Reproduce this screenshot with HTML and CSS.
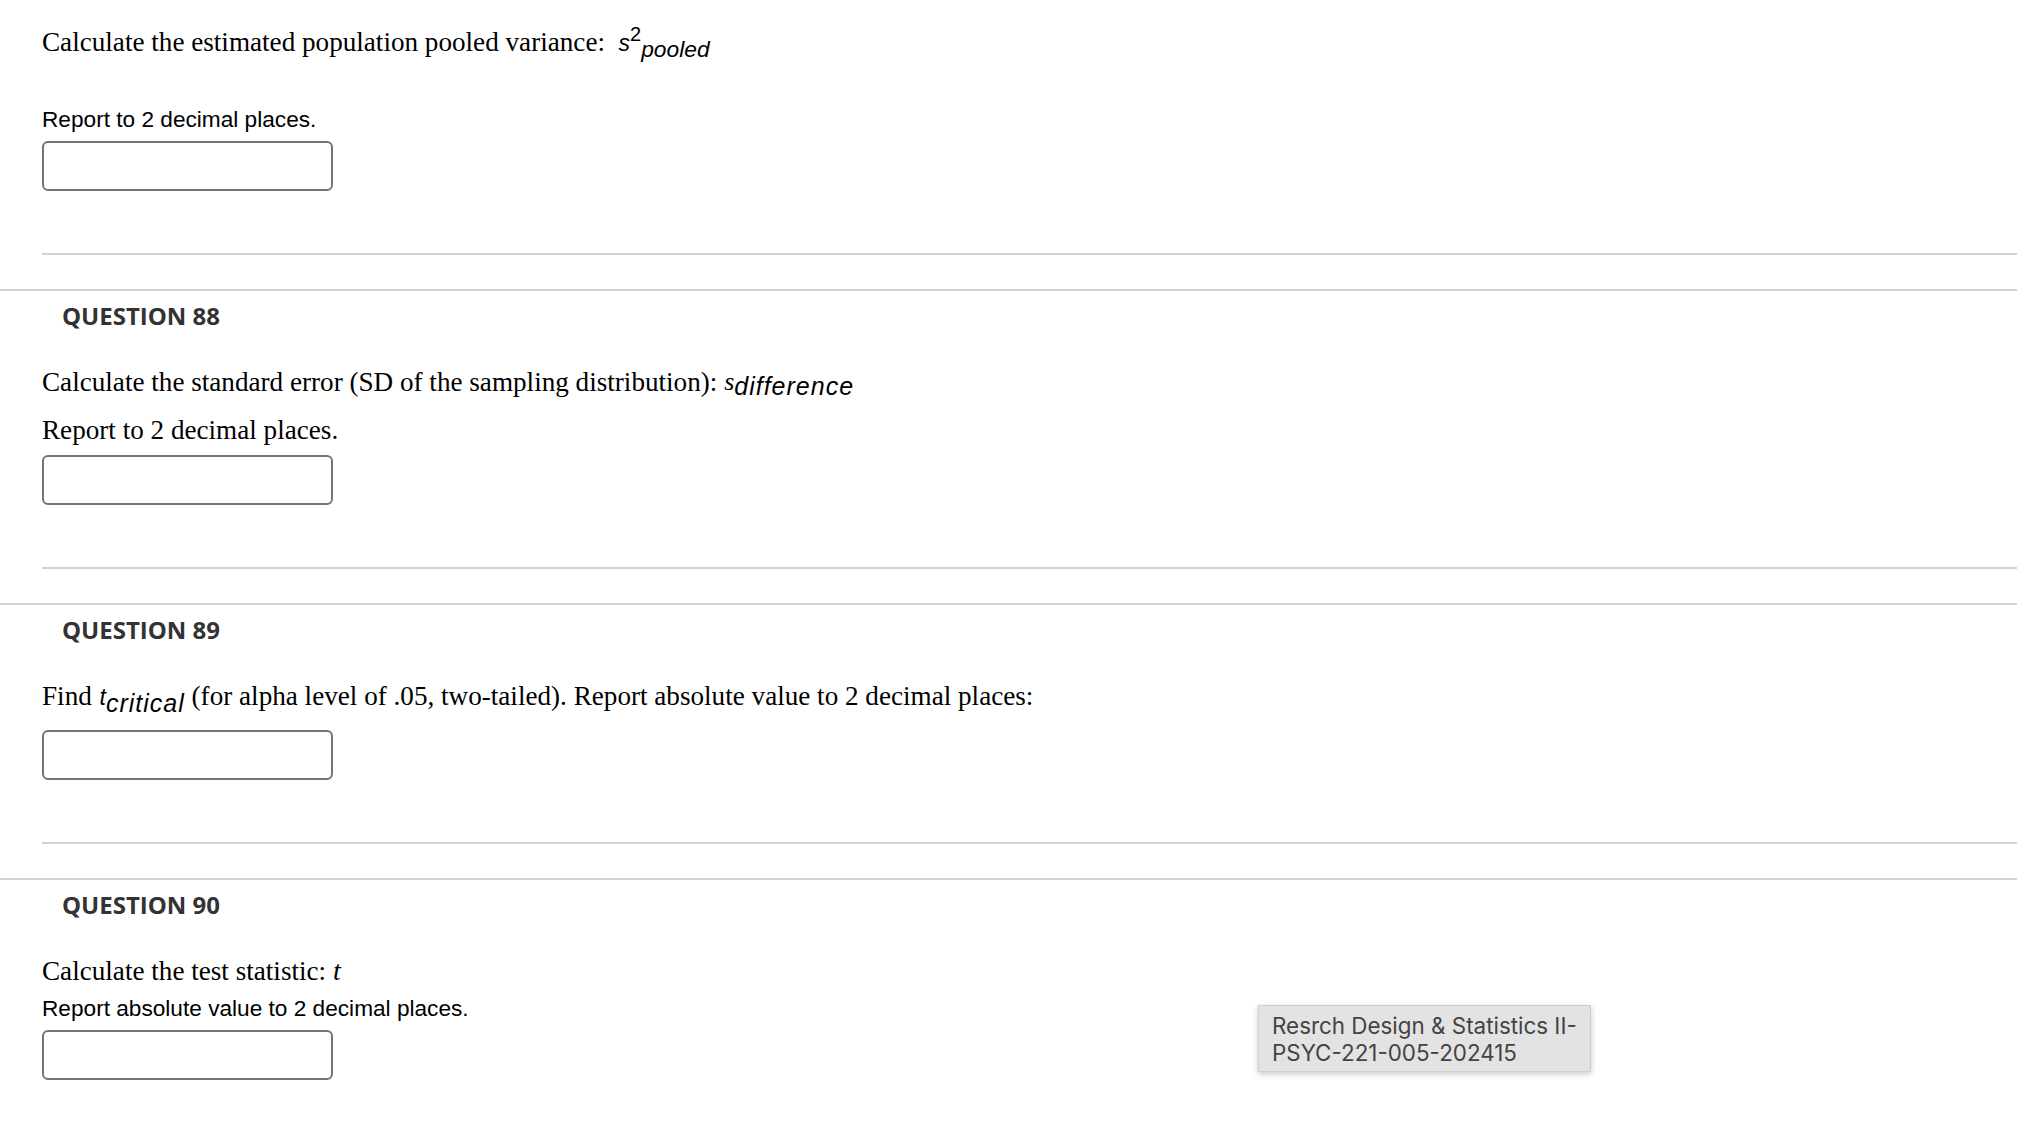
FILE: index.html
```html
<!DOCTYPE html>
<html lang="en">
<head>
<meta charset="utf-8">
<title>Questions</title>
<link rel="stylesheet" href="styles.css">
</head>
<body>
<div class="page">
  <section class="q q-first">
    <div class="q-body">
      <p class="serif">Calculate the estimated population pooled variance:&nbsp;&nbsp;<i class="m-s">s</i><span class="m-sup">2</span><i class="m-sub">pooled</i></p>
      <p class="sans sans-gap-lg">Report to 2 decimal places.</p>
      <div class="answer answer-after-sans"></div>
    </div>
    <hr class="divider">
  </section>

  <section class="q">
    <h3 class="q-title">QUESTION 88</h3>
    <div class="q-body">
      <p class="serif first-line">Calculate the standard error (SD of the sampling distribution): <i class="m-s-serif">s</i><i class="m-sub-wide m-sub-diff">difference</i></p>
      <p class="serif serif-gap">Report to 2 decimal places.</p>
      <div class="answer answer-after-serif"></div>
    </div>
    <hr class="divider">
  </section>

  <section class="q">
    <h3 class="q-title">QUESTION 89</h3>
    <div class="q-body">
      <p class="serif first-line">Find <i class="m-t">t</i><i class="m-sub-wide m-sub-crit">critical</i> (for alpha level of .05, two-tailed). Report absolute value to 2 decimal places:</p>
      <div class="answer answer-after-sub"></div>
    </div>
    <hr class="divider">
  </section>

  <section class="q">
    <h3 class="q-title">QUESTION 90</h3>
    <div class="q-body">
      <p class="serif first-line">Calculate the test statistic: <i class="m-t-serif">t</i></p>
      <p class="sans sans-gap-sm">Report absolute value to 2 decimal places.</p>
      <div class="answer answer-after-sans"></div>
    </div>
  </section>
</div>

<div class="tooltip">Resrch Design &amp; Statistics II-<br>PSYC-221-005-202415</div>
</body>
</html>
```

FILE: styles.css
```css
* {
  box-sizing: border-box;
}

html, body {
  margin: 0;
  padding: 0;
  background: #ffffff;
}

.page {
  padding-top: 26px;
}

.q {
  border-top: 2px solid #d2d2d2;
  padding-top: 9px;
}

.q-first {
  border-top: none;
  padding-top: 0;
}

.q-title {
  margin: 0 0 0 62px;
  font-family: "Open Sans", sans-serif;
  font-weight: 700;
  font-size: 24px;
  line-height: 32px;
  color: #333333;
}

.q-body {
  padding-left: 42px;
}

.serif {
  margin: 0;
  font-family: "Liberation Serif", "Times New Roman", serif;
  font-size: 27.15px;
  line-height: 32px;
  color: #000000;
}

.sans {
  margin: 0;
  font-family: "Liberation Sans", Arial, sans-serif;
  font-size: 22.65px;
  line-height: 28px;
  color: #000000;
}

.first-line {
  margin-top: 34px;
}

.serif-gap {
  margin-top: 16px;
}

.sans-gap-lg {
  margin-top: 47px;
}

.sans-gap-sm {
  margin-top: 7px;
}

.answer {
  width: 291px;
  height: 50px;
  border: 2px solid #747474;
  border-radius: 6px;
  background: #ffffff;
}

.answer-after-sans {
  margin-top: 8px;
}

.answer-after-serif {
  margin-top: 9px;
}

.answer-after-sub {
  margin-top: 18px;
}

.divider {
  display: block;
  height: 0;
  margin: 62px 0 34px 42px;
  border: 0;
  border-top: 2px solid #d2d2d2;
}

/* inline math */
.m-s {
  font-family: "Liberation Sans", Arial, sans-serif;
  font-style: italic;
  font-size: 23px;
  line-height: 0;
}

.m-sup {
  font-family: "Liberation Sans", Arial, sans-serif;
  font-size: 20px;
  line-height: 0;
  vertical-align: 10px;
}

.m-sub {
  font-family: "Liberation Sans", Arial, sans-serif;
  font-style: italic;
  font-size: 22.8px;
  line-height: 0;
  vertical-align: -6px;
}

.m-s-serif {
  font-family: "Liberation Serif", "Times New Roman", serif;
  font-style: italic;
  font-size: 26px;
  line-height: 0;
  vertical-align: 1px;
}

.m-sub-wide {
  font-family: "Liberation Sans", Arial, sans-serif;
  font-style: italic;
  font-size: 25px;
  letter-spacing: 1px;
  line-height: 0;
}

.m-sub-diff {
  vertical-align: -3.5px;
}

.m-sub-crit {
  vertical-align: -6.5px;
}

.m-t {
  font-family: "Liberation Sans", Arial, sans-serif;
  font-style: italic;
  font-size: 23px;
  line-height: 0;
  padding-left: 1px;
}

.m-t-serif {
  font-family: "Liberation Serif", "Times New Roman", serif;
  font-style: italic;
  font-size: 28px;
}

.tooltip {
  position: absolute;
  left: 1258px;
  top: 1005px;
  width: 333px;
  height: 67px;
  padding: 6px 13px;
  background: #e3e3e3;
  border: 1px solid #cfcfcf;
  box-shadow: 0 2px 6px rgba(0, 0, 0, 0.22);
  font-family: Inter, "Noto Sans", sans-serif;
  font-size: 22.4px;
  line-height: 27px;
  color: #444444;
  white-space: nowrap;
}
```
